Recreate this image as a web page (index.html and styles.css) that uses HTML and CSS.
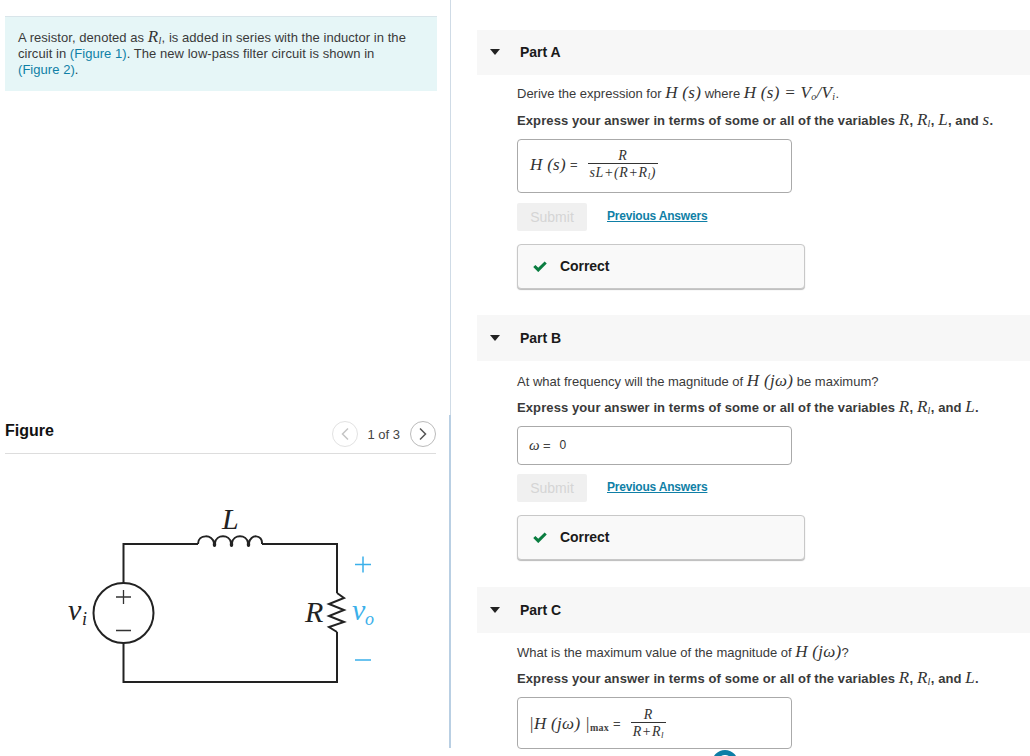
FILE: index.html
```html
<!DOCTYPE html>
<html lang="en">
	<head>
		<meta charset="UTF-8" />
		<meta name="viewport" content="width=device-width, initial-scale=1.0" />
		<title>Part A, B, C</title>
		<link rel="stylesheet" href="styles.css">
	</head>
	<body>
		<div class="page">
			<div class="left">
				<div class="left__top">
					<div class="intro">
						A resistor, denoted as <span class="m">R<sub>l</sub></span>, is added in series with the inductor in the circuit in <a href="#">(Figure 1)</a>. The new low-pass filter circuit is shown in <a href="#">(Figure 2)</a>.
					</div>
				</div>

				<div class="left__figure">
					<div class="figure__head">
						<h2>Figure</h2>
						<div class="pager">
							<span class="pager__btn pager__btn--off">
								<svg width="10" height="14" viewBox="0 0 10 14"><path d="M8 1.500 2.500 7 8 12.500" /></svg>
							</span>
							<span class="pager__text">1 of 3</span>
							<span class="pager__btn">
								<svg width="10" height="14" viewBox="0 0 10 14"><path d="M2 1.500 7.500 7 2 12.500" /></svg>
							</span>
						</div>
					</div>

					<svg class="circuit" width="350" height="200" viewBox="50 500 350 200">
						<g class="wire">
							<path d="M198 544H123.500V583" />
							<path d="M123.500 643V682H337V632" />
							<path d="M337 593V544H262" />
							<circle cx="123.500" cy="613" r="30" />
							<path d="M198 544c0-10 15-10 16-1c-1 4 2 4 1 0c1-9 15-9 16 0c-1 4 2 4 1 0c1-9 15-9 16 0c-1 4 2 4 1 0c1-9 14-9 13 1" />
							<path d="M337 593l7 5l-15 6l15 6l-15 6l15 6l-15 5l8 5" />
						</g>
						<g class="thin">
							<path d="M116 597h15M123.500 590v14M116 630.500h15" />
						</g>
						<g class="thin thin--blue">
							<path d="M355 564.500h16M363 556.500v16M355 660h16" />
						</g>
						<text class="lbl" x="222" y="529">L</text>
						<text class="lbl" x="305" y="622">R</text>
						<text class="lbl" x="68" y="620">v</text>
						<text class="lbl lbl--sub" x="82" y="625">i</text>
						<text class="lbl lbl--blue" x="352" y="620">v</text>
						<text class="lbl lbl--sub lbl--blue" x="365" y="625">o</text>
					</svg>
				</div>
			</div>

			<div class="right">
				<div class="part part--a">
					<div class="part__head">
						<span class="caret"></span>
						<h3>Part A</h3>
					</div>
					<div class="part__body">
						<p class="prompt">Derive the expression for <span class="m">H (s)</span> where <span class="m">H (s) = V<sub>o</sub>/V<sub>i</sub></span>.</p>
						<p class="hint">Express your answer in terms of some or all of the variables <span class="m">R</span>, <span class="m">R<sub>l</sub></span>, <span class="m">L</span>, and <span class="m">s</span>.</p>
						<div class="answer answer--tall">
							<span class="m">H (s)</span>
							<span class="eq">=</span>
							<span class="frac m">
								<span class="frac__top">R</span>
								<span class="frac__bot">sL+(R+R<sub>l</sub>)</span>
							</span>
						</div>
						<div class="actions">
							<button class="submit" disabled>Submit</button>
							<a class="prev" href="#">Previous Answers</a>
						</div>
						<div class="correct">
							<svg width="14" height="12" viewBox="0 0 16 13"><path d="M1.500 6.500 6 11 14.500 2.500" /></svg>
							<span>Correct</span>
						</div>
					</div>
				</div>

				<div class="part part--b">
					<div class="part__head">
						<span class="caret"></span>
						<h3>Part B</h3>
					</div>
					<div class="part__body">
						<p class="prompt">At what frequency will the magnitude of <span class="m">H (jω)</span> be maximum?</p>
						<p class="hint">Express your answer in terms of some or all of the variables <span class="m">R</span>, <span class="m">R<sub>l</sub></span>, and <span class="m">L</span>.</p>
						<div class="answer answer--short">
							<span class="m m--small">ω</span>
							<span class="eq eq--tight">=</span>
							<span class="value">0</span>
						</div>
						<div class="actions">
							<button class="submit" disabled>Submit</button>
							<a class="prev" href="#">Previous Answers</a>
						</div>
						<div class="correct">
							<svg width="14" height="12" viewBox="0 0 16 13"><path d="M1.500 6.500 6 11 14.500 2.500" /></svg>
							<span>Correct</span>
						</div>
					</div>
				</div>

				<div class="part part--c">
					<div class="part__head">
						<span class="caret"></span>
						<h3>Part C</h3>
					</div>
					<div class="part__body">
						<p class="prompt">What is the maximum value of the magnitude of <span class="m">H (jω)</span>?</p>
						<p class="hint">Express your answer in terms of some or all of the variables <span class="m">R</span>, <span class="m">R<sub>l</sub></span>, and <span class="m">L</span>.</p>
						<div class="answer answer--max">
							<span class="m">|H (jω) |<sub class="max">max</sub></span>
							<span class="eq">=</span>
							<span class="frac m">
								<span class="frac__top">R</span>
								<span class="frac__bot">R+R<sub>l</sub></span>
							</span>
						</div>
					</div>
				</div>
			</div>
		</div>
		<span class="spinner"></span>
	</body>
</html>
```

FILE: styles.css
```css
* {
	box-sizing: border-box;
	margin: 0;
	padding: 0;
}

html,
body {
	height: 756px;
	overflow: hidden;
}

body {
	font-family: "Liberation Sans", Arial, sans-serif;
	font-size: 13px;
	color: #3a3a3a;
	background-color: #fff;
	position: relative;
}

a {
	color: #0f7fa6;
	text-decoration: none;
	white-space: nowrap;
}

.page {
	display: flex;
}

.left {
	width: 451px;
	flex: none;
}

.left__top {
	height: 415px;
	padding: 16px 13px 0 5px;
	border-right: 1px solid #cfdbe6;
}

.left__figure {
	height: 333px;
	padding-left: 5px;
	border-right: 2px solid #b9cfe3;
}

.intro {
	height: 75px;
	padding: 11px 13px 0;
	line-height: 16px;
	letter-spacing: 0.05px;
	background-color: #e6f6f7;
	border-top: 1px solid #d9e5ea;
}

.figure__head {
	display: flex;
	justify-content: space-between;
	align-items: center;
	width: 431px;
	height: 39px;
	border-bottom: 1px solid #ddd;
}

.figure__head h2 {
	font-size: 16px;
	color: #111;
	margin-top: -6px;
}

.pager {
	display: flex;
	align-items: center;
	margin-top: -1px;
}

.pager__text {
	margin: 0 10px 0 9px;
	padding-top: 2px;
	color: #444;
}

.pager__btn {
	display: flex;
	justify-content: center;
	align-items: center;
	width: 26px;
	height: 26px;
	border: 1px solid #bbb;
	border-radius: 50%;
}

.pager__btn path {
	fill: none;
	stroke: #555;
	stroke-width: 1.500;
}

.pager__btn--off {
	border-color: #e2e2e2;
}

.pager__btn--off path {
	stroke: #c4c4c4;
}

.circuit {
	display: block;
	margin: 46px 0 0 45px;
}

.wire path,
.wire circle {
	fill: none;
	stroke: #222;
	stroke-width: 2;
}

.thin path {
	fill: none;
	stroke: #333;
	stroke-width: 1.300;
}

.thin--blue path {
	stroke: #3bb0ea;
	stroke-width: 1.500;
}

.lbl {
	font-family: "Liberation Serif", serif;
	font-style: italic;
	font-size: 30px;
	fill: #222;
}

.lbl--sub {
	font-size: 18px;
}

.lbl--blue {
	fill: #3bb0ea;
}

.right {
	flex: 1;
	padding: 30px 0 0 26px;
}

.part__head {
	display: flex;
	align-items: center;
	height: 45px;
	padding-bottom: 1px;
	background-color: #f7f7f7;
}

.part__head h3 {
	font-size: 14px;
	font-weight: bold;
	color: #1a1a1a;
}

.caret {
	width: 0;
	height: 0;
	margin: 0 20px 0 13px;
	border-left: 5px solid transparent;
	border-right: 5px solid transparent;
	border-top: 6px solid #222;
}

.part__body {
	padding-left: 40px;
}

.part--b {
	margin-top: 26px;
}

.part--c {
	margin-top: 27px;
}

.part--b .part__head,
.part--c .part__head {
	height: 46px;
}

.prompt {
	padding-top: 9px;
	line-height: 20px;
}

.part--b .prompt {
	padding-top: 11px;
}

.part--c .prompt {
	padding-top: 10px;
}

.hint {
	margin-top: 7px;
	line-height: 20px;
	font-weight: bold;
	letter-spacing: 0.1px;
}

.part--b .hint,
.part--c .hint {
	margin-top: 6px;
}

.hint .m {
	font-weight: normal;
}

.m {
	font-family: "Liberation Serif", serif;
	font-style: italic;
	font-size: 17px;
	line-height: 1;
	letter-spacing: 0.3px;
	color: #333;
}

.m sub {
	font-size: 10px;
	line-height: 0;
	vertical-align: -2px;
}

.m--small {
	font-size: 15px;
}

.answer {
	display: flex;
	align-items: center;
	width: 275px;
	margin-top: 8px;
	padding-left: 12px;
	background-color: #fff;
	border: 1px solid #aaa;
	border-radius: 4px;
}

.answer--tall {
	height: 54px;
	padding-bottom: 3px;
}

.answer--short {
	height: 39px;
	padding-left: 11px;
	padding-bottom: 1px;
}

.answer--max {
	height: 52px;
	padding-left: 11px;
}

.eq {
	margin: 0 10px 0 4px;
	color: #444;
}

.eq--tight {
	margin: 0 9px 0 3px;
}

.value {
	font-size: 12px;
	color: #333;
}

.max {
	font-family: "Liberation Serif", serif;
	font-style: normal;
	font-weight: bold;
	color: #444;
}

.frac {
	display: inline-flex;
	flex-direction: column;
	align-items: center;
	font-size: 14px;
	letter-spacing: 0.6px;
}

.frac__top {
	padding: 0 2px;
	line-height: 14px;
}

.frac__bot {
	width: 100%;
	padding: 1px 2px 0;
	line-height: 15px;
	border-top: 1px solid #333;
}

.frac sub {
	font-size: 9px;
}

.actions {
	display: flex;
	align-items: center;
	margin-top: 10px;
}

.part--b .actions {
	margin-top: 9px;
}

.submit {
	width: 70px;
	height: 28px;
	font-family: inherit;
	font-size: 14px;
	color: #d5d5d5;
	background-color: #f0f0f0;
	border: none;
	border-radius: 2px;
}

.prev {
	margin-left: 20px;
	margin-top: -2px;
	font-size: 12px;
	font-weight: bold;
	letter-spacing: -0.2px;
	text-decoration: underline;
}

.correct {
	display: flex;
	align-items: center;
	gap: 13px;
	width: 288px;
	height: 45px;
	margin-top: 13px;
	padding-left: 15px;
	padding-bottom: 1px;
	font-size: 14px;
	font-weight: bold;
	letter-spacing: -0.05px;
	color: #1a1a1a;
	background-color: #f9f9f9;
	border: 1px solid #c8c8c8;
	border-radius: 4px;
	box-shadow: 0 1px 1px #bbb;
}

.correct svg path {
	fill: none;
	stroke: #0a7d40;
	stroke-width: 3.500;
}

.spinner {
	position: absolute;
	left: 712px;
	top: 750px;
	width: 26px;
	height: 26px;
	border: 5px solid #0d7ea6;
	border-radius: 50%;
}
```
